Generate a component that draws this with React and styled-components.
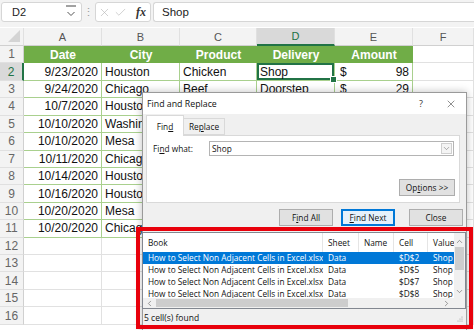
import styled, { createGlobalStyle } from 'styled-components';
import { X, Check, ChevronUp, ChevronDown, ChevronLeft, ChevronRight } from 'lucide-react';

const COLS = '24px 78px 78px 77px 78px 78px 1fr';
const LETTERS = ['A', 'B', 'C', 'D', 'E', 'F'];
const HEADERS = ['Date', 'City', 'Product', 'Delivery', 'Amount'];

const DATA = [
  ['9/23/2020', 'Houston', 'Chicken', 'Shop', '98'],
  ['9/24/2020', 'Chicago', 'Beef', 'Doorstep', '29'],
  ['10/7/2020', 'Houston', 'Chicken', 'Shop', '45'],
  ['10/10/2020', 'Washington', 'Beef', 'Doorstep', '62'],
  ['10/10/2020', 'Mesa', 'Chicken', 'Shop', '37'],
  ['10/11/2020', 'Chicago', 'Beef', 'Doorstep', '81'],
  ['10/14/2020', 'Houston', 'Chicken', 'Shop', '54'],
  ['10/16/2020', 'Houston', 'Beef', 'Shop', '73'],
  ['10/20/2020', 'Mesa', 'Chicken', 'Doorstep', '26'],
  ['10/20/2020', 'Chicago', 'Beef', 'Doorstep', '90']
];

const RESULTS = [
  ['How to Select Non Adjacent Cells in Excel.xlsx', 'Data', '', '$D$2', 'Shop'],
  ['How to Select Non Adjacent Cells in Excel.xlsx', 'Data', '', '$D$5', 'Shop'],
  ['How to Select Non Adjacent Cells in Excel.xlsx', 'Data', '', '$D$7', 'Shop'],
  ['How to Select Non Adjacent Cells in Excel.xlsx', 'Data', '', '$D$8', 'Shop']
];

export default function App() {
  return (
    <Screen>
      <GlobalStyle />
      <FormulaBar>
        <NameBox>
          D2
          <svg width="10" height="14" viewBox="0 0 10 14">
            <line x1="0" y1="1" x2="10" y2="1" stroke="#444" strokeWidth="1" />
            <path d="M1.5 7 L5 10.5 L8.5 7" fill="none" stroke="#555" strokeWidth="1" />
          </svg>
        </NameBox>
        <Dots>⋮</Dots>
        <FxBox>
          <X size={13} strokeWidth={1.2} color="#b8b8b8" />
          <Check size={13} strokeWidth={1.2} color="#b8b8b8" />
          <Fx>fx</Fx>
        </FxBox>
        <FormulaInput>Shop</FormulaInput>
      </FormulaBar>

      <Sheet>
        <Row>
          <Corner>
            <svg width="12" height="12" viewBox="0 0 12 12">
              <path d="M12 0 L12 12 L0 12 Z" fill="#d4d4d4" />
            </svg>
          </Corner>
          {LETTERS.map((l) => (
            <ColHead key={l} $active={l === 'D'}>
              {l}
            </ColHead>
          ))}
        </Row>

        <Row>
          <RowHead>1</RowHead>
          {HEADERS.map((h) => (
            <TableHead key={h}>{h}</TableHead>
          ))}
          <Cell />
        </Row>

        {DATA.map((r, i) => (
          <Row key={i}>
            <RowHead $active={i === 0}>{i + 2}</RowHead>
            <Cell $table $align="right">{r[0]}</Cell>
            <Cell $table>{r[1]}</Cell>
            <Cell $table>{r[2]}</Cell>
            <Cell $table $selected={i === 0}>
              {r[3]}
            </Cell>
            <Cell $table $money>
              <span>$</span>
              <span>{r[4]}</span>
            </Cell>
            <Cell />
          </Row>
        ))}

        {[12, 13, 14, 15, 16].map((n) => (
          <Row key={n}>
            <RowHead>{n}</RowHead>
            <Cell />
            <Cell />
            <Cell />
            <Cell />
            <Cell />
            <Cell />
          </Row>
        ))}
      </Sheet>

      <Dialog>
        <TitleBar>
          <span>Find and Replace</span>
          <TitleHelp>?</TitleHelp>
          <X size={12} strokeWidth={1.1} color="#333" />
        </TitleBar>
        <DialogBody>
          <TabStrip>
            <Tab $active>
              Fin<u>d</u>
            </Tab>
            <Tab>
              Re<u>p</u>lace
            </Tab>
          </TabStrip>
          <Panel>
            <FindRow>
              <Label>
                Fi<u>n</u>d what:
              </Label>
              <ComboBox>
                <ComboText>Shop</ComboText>
                <ComboButton>
                  <ChevronDown size={9} strokeWidth={1.4} color="#666" />
                </ComboButton>
              </ComboBox>
            </FindRow>
            <OptionsButton>
              Op<u>t</u>ions &gt;&gt;
            </OptionsButton>
          </Panel>
          <ButtonRow>
            <DlgButton>
              F<u>i</u>nd All
            </DlgButton>
            <DlgButton $default>
              <u>F</u>ind Next
            </DlgButton>
            <DlgButton $wide>Close</DlgButton>
          </ButtonRow>

          <ListView>
            <ListMain>
              <ListHeader>
                <HeadCol>Book</HeadCol>
                <HeadCol>Sheet</HeadCol>
                <HeadCol>Name</HeadCol>
                <HeadCol>Cell</HeadCol>
                <HeadCol>Value</HeadCol>
              </ListHeader>
              <ListBody>
                {RESULTS.map((r, i) => (
                  <ListRow key={i} $selected={i === 0}>
                    {r.map((c, j) => (
                      <ListCol key={j}>{c}</ListCol>
                    ))}
                  </ListRow>
                ))}
              </ListBody>
            </ListMain>
            <VScroll>
              <ChevronUp size={9} strokeWidth={1.5} color="#555" />
              <VThumb />
              <ChevronDown size={9} strokeWidth={1.5} color="#555" />
            </VScroll>
            <HScroll>
              <ChevronLeft size={9} strokeWidth={1.5} color="#555" />
              <HThumb />
              <ChevronRight size={9} strokeWidth={1.5} color="#555" />
            </HScroll>
            <ScrollCorner />
          </ListView>

          <StatusBar>
            <span>5 cell(s) found</span>
            <svg width="8" height="8" viewBox="0 0 8 8">
              <circle cx="7" cy="3" r="0.6" fill="#999" />
              <circle cx="5" cy="5" r="0.6" fill="#999" />
              <circle cx="7" cy="5" r="0.6" fill="#999" />
              <circle cx="3" cy="7" r="0.6" fill="#999" />
              <circle cx="5" cy="7" r="0.6" fill="#999" />
              <circle cx="7" cy="7" r="0.6" fill="#999" />
            </svg>
          </StatusBar>
        </DialogBody>
      </Dialog>

      <RedFrame />
    </Screen>
  );
}

// стили
const GlobalStyle = createGlobalStyle`
  body {
    margin: 0;
    background: #fff;
    overflow: hidden;
    font-family: 'Liberation Sans', Arial, sans-serif;
  }
`;

const Screen = styled.div`
  position: relative;
  width: 474px;
  height: 330px;
  overflow: hidden;
  background: #fff;
`;

const FormulaBar = styled.div`
  height: 27px;
  display: flex;
  align-items: flex-start;
  padding: 2px 0 0 1px;
  box-sizing: border-box;
  background: #f3f3f3;
  font-size: 11px;
  color: #222;
`;

const BarBox = styled.div`
  height: 20px;
  box-sizing: border-box;
  border: 1px solid #d6d6d6;
  border-radius: 3px;
  background: #fff;
  display: flex;
  align-items: center;
`;

const NameBox = styled(BarBox)`
  width: 81px;
  padding: 0 5px 0 10px;
  justify-content: space-between;
`;

const Dots = styled.div`
  width: 13px;
  height: 20px;
  line-height: 20px;
  text-align: center;
  color: #9a9a9a;
  font-size: 11px;
`;

const FxBox = styled(BarBox)`
  width: 56px;
  padding: 0 4px 0 2px;
  gap: 3px;
`;

const Fx = styled.span`
  margin-left: auto;
  font-family: 'Liberation Serif', serif;
  font-style: italic;
  font-weight: bold;
  font-size: 12px;
  color: #333;
`;

const FormulaInput = styled(BarBox)`
  flex: 1;
  margin-left: 2px;
  padding-left: 8px;
  border-right: none;
  border-radius: 3px 0 0 3px;
  font-size: 11.5px;
`;

const Sheet = styled.div`
  display: flex;
  flex-direction: column;
  margin-top: 1px;
`;

const Row = styled.div`
  display: grid;
  grid-template-columns: ${COLS};
  height: 17.43px;
  &:first-child {
    height: 18px;
  }
`;

const Corner = styled.div`
  background: #f3f3f3;
  border-right: 1px solid #e0e0e0;
  border-bottom: 1px solid #d0d0d0;
  display: flex;
  align-items: flex-end;
  justify-content: flex-end;
  padding: 0 3px 3px 0;
`;

const ColHead = styled.div`
  background: ${(p) => (p.$active ? '#d9d9d9' : '#f3f3f3')};
  border-right: 1px solid #e0e0e0;
  border-bottom: ${(p) => (p.$active ? '2px solid #217346' : '1px solid #d0d0d0')};
  color: ${(p) => (p.$active ? '#217346' : '#555')};
  font-size: 11px;
  display: flex;
  align-items: center;
  justify-content: center;
`;

const RowHead = styled.div`
  background: ${(p) => (p.$active ? '#d9d9d9' : '#f3f3f3')};
  border-bottom: 1px solid #e0e0e0;
  border-right: ${(p) => (p.$active ? '2px solid #217346' : '1px solid #d0d0d0')};
  color: ${(p) => (p.$active ? '#217346' : '#666')};
  font-size: 12px;
  display: flex;
  align-items: center;
  justify-content: center;
`;

const TableHead = styled.div`
  background: #70ad47;
  color: #fff;
  font-weight: bold;
  font-size: 12px;
  display: flex;
  align-items: center;
  justify-content: center;
`;

const Cell = styled.div`
  position: relative;
  box-sizing: border-box;
  border-right: 1px solid ${(p) => (p.$table ? '#a9d08e' : '#e1e1e1')};
  border-bottom: 1px solid ${(p) => (p.$table ? '#a9d08e' : '#e1e1e1')};
  padding: 0 3px;
  font-size: 12px;
  color: #111;
  white-space: nowrap;
  overflow: hidden;
  display: flex;
  align-items: center;
  justify-content: ${(p) => (p.$money ? 'space-between' : p.$align === 'right' ? 'flex-end' : 'flex-start')};
  ${(p) => p.$money && 'padding: 0 3px 0 5px;'}
  ${(p) =>
    p.$selected &&
    `
    overflow: visible;
    box-shadow: inset 0 0 0 2px #217346;
    &::after {
      content: '';
      position: absolute;
      right: -3px;
      bottom: -3px;
      width: 5px;
      height: 5px;
      background: #217346;
      border: 1px solid #fff;
      z-index: 2;
    }
  `}
`;

const Dialog = styled.div`
  position: absolute;
  left: 142px;
  top: 92px;
  width: 325px;
  height: 250px;
  box-sizing: border-box;
  border: 1px solid #9a9a9a;
  background: #f0f0f0;
  box-shadow: 0 0 8px rgba(0, 0, 0, 0.25);
  font-family: 'Open Sans', 'Liberation Sans', sans-serif;
  font-size: 8.3px;
  color: #111;
  display: flex;
  flex-direction: column;
  z-index: 5;
`;

const TitleBar = styled.div`
  height: 21px;
  flex: none;
  background: #fff;
  display: flex;
  align-items: center;
  padding: 0 9px 0 4px;
  font-size: 8.8px;
`;

const TitleHelp = styled.span`
  margin-left: auto;
  margin-right: 22px;
  font-size: 9px;
  color: #333;
`;

const DialogBody = styled.div`
  flex: 1;
  display: flex;
  flex-direction: column;
`;

const TabStrip = styled.div`
  height: 21px;
  display: flex;
  align-items: flex-end;
  padding-left: 3px;
`;

const Tab = styled.div`
  position: relative;
  z-index: 1;
  box-sizing: border-box;
  width: ${(p) => (p.$active ? '38px' : '41px')};
  height: ${(p) => (p.$active ? '21px' : '17px')};
  margin-bottom: ${(p) => (p.$active ? '-1px' : '0')};
  background: ${(p) => (p.$active ? '#fff' : '#f0f0f0')};
  border: 1px solid #d9d9d9;
  border-bottom: ${(p) => (p.$active ? 'none' : '1px solid #d9d9d9')};
  border-left: ${(p) => (p.$active ? '1px solid #d9d9d9' : 'none')};
  display: flex;
  align-items: center;
  justify-content: center;
`;

const Panel = styled.div`
  height: 68px;
  margin: 0 6px 0 3px;
  box-sizing: border-box;
  background: #fff;
  border: 1px solid #d9d9d9;
  padding: 5px 4px 6px 6px;
  display: flex;
  flex-direction: column;
  align-items: flex-end;
`;

const FindRow = styled.div`
  align-self: stretch;
  display: flex;
  align-items: center;
  padding-right: 1px;
`;

const Label = styled.div`
  width: 56px;
  flex: none;
`;

const ComboBox = styled.div`
  flex: 1;
  height: 15px;
  box-sizing: border-box;
  border: 1px solid #b4b4b4;
  display: flex;
  align-items: center;
  background: #fff;
`;

const ComboText = styled.span`
  flex: 1;
  padding-left: 2px;
`;

const ComboButton = styled.div`
  width: 11px;
  height: 11px;
  margin-right: 1px;
  box-sizing: border-box;
  border: 1px solid #cfcfcf;
  background: #f4f4f4;
  display: flex;
  align-items: center;
  justify-content: center;
`;

const OptionsButton = styled.div`
  margin-top: auto;
  width: 56px;
  height: 17px;
  box-sizing: border-box;
  background: #e1e1e1;
  border: 1px solid #adadad;
  display: flex;
  align-items: center;
  justify-content: center;
`;

const ButtonRow = styled.div`
  margin-top: 6px;
  height: 17px;
  display: flex;
  justify-content: flex-end;
  gap: 8px;
  padding-right: 3px;
`;

const DlgButton = styled.div`
  width: 54px;
  box-sizing: border-box;
  background: ${(p) => (p.$default ? '#e5f1fb' : '#e1e1e1')};
  border: ${(p) => (p.$default ? '2px solid #0078d7' : '1px solid #adadad')};
  margin-left: ${(p) => (p.$wide ? '6px' : '0')};
  display: flex;
  align-items: center;
  justify-content: center;
`;

const ListView = styled.div`
  margin: 6px 0 0 -1px;
  height: 77px;
  box-sizing: border-box;
  border: 1px solid #828790;
  background: #fff;
  display: grid;
  grid-template-columns: 1fr 11px;
  grid-template-rows: 1fr 10px;
`;

const ListMain = styled.div`
  overflow: hidden;
  display: flex;
  flex-direction: column;
`;

const LIST_COLS = '180px 36px 35px 34px 1fr';

const ListHeader = styled.div`
  height: 19px;
  flex: none;
  display: grid;
  grid-template-columns: ${LIST_COLS};
`;

const HeadCol = styled.div`
  display: flex;
  align-items: center;
  padding-left: 5px;
  border-right: 1px solid #e5e5e5;
  &:last-child {
    border-right: none;
  }
`;

const ListBody = styled.div`
  flex: 1;
  overflow: hidden;
`;

const ListRow = styled.div`
  height: 12px;
  display: grid;
  grid-template-columns: ${LIST_COLS};
  background: ${(p) => (p.$selected ? '#0078d7' : 'transparent')};
  color: ${(p) => (p.$selected ? '#fff' : '#111')};
`;

const ListCol = styled.div`
  padding-left: 5px;
  white-space: nowrap;
  overflow: hidden;
  line-height: 12px;
`;

const VScroll = styled.div`
  background: #f0f0f0;
  display: flex;
  flex-direction: column;
  align-items: center;
  padding: 4px 0 2px;
`;

const VThumb = styled.div`
  width: 9px;
  height: 23px;
  margin: 1px 0 auto;
  background: #cdcdcd;
`;

const HScroll = styled.div`
  background: #f0f0f0;
  display: flex;
  align-items: center;
  padding: 0 3px 0 2px;
`;

const HThumb = styled.div`
  width: 192px;
  height: 8px;
  margin: 0 auto 0 2px;
  background: #cdcdcd;
`;

const ScrollCorner = styled.div`
  background: #f0f0f0;
`;

const StatusBar = styled.div`
  height: 17px;
  display: flex;
  align-items: center;
  justify-content: space-between;
  padding: 0 3px 0 1px;
  font-size: 8.5px;
`;

const RedFrame = styled.div`
  position: absolute;
  left: 136px;
  top: 227px;
  width: 337px;
  height: 102px;
  box-sizing: border-box;
  border: 4px solid #e8000b;
  pointer-events: none;
  z-index: 10;
`;
